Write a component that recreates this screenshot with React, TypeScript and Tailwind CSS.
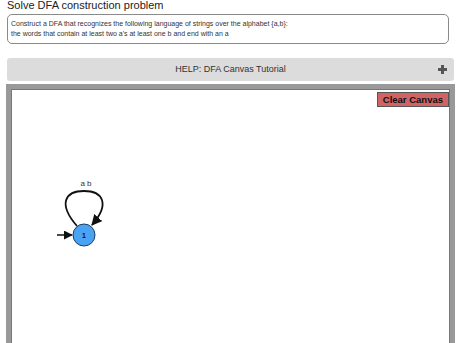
export default function App() {
  return (
    <div className="w-[474px] h-[343px] overflow-hidden bg-white font-['Liberation_Sans',Arial,sans-serif] text-[#222]">
      <div className="pl-[7px]">
        <h1 className="mt-[-1px] text-[11px] leading-[13px] font-normal text-[#222]">
          Solve DFA construction problem
        </h1>
        <div className="mt-[2px] w-[442px] h-[30px] rounded-[5px] border border-[#8a8a8a] px-[3px] pt-[4px] text-[7px] leading-[10px] text-[#333]">
          <p>Construct a DFA that recognizes the following language of strings over the alphabet {"{a,b}"}:</p>
          <p>the words that contain at least two a's at least one b and end with an a</p>
        </div>
        <div className="relative mt-[14px] w-[447px] h-[23px] rounded-[3px] bg-[#dcdcdc] flex items-center justify-center text-[9px] text-[#333]">
          HELP: DFA Canvas Tutorial
          <svg className="absolute right-[7px] top-[7px]" width="9" height="9" viewBox="0 0 9 9">
            <rect x="3" y="0" width="3" height="9" fill="#555" />
            <rect x="0" y="3" width="9" height="3" fill="#555" />
          </svg>
        </div>
        <div className="relative mt-[3px] ml-[-1px] w-[449px] h-[270px] border-[5px] border-[#999] bg-white">
          <div className="absolute inset-0 border border-[#777]" />
          <button className="absolute right-[1px] top-[3px] h-[15px] px-[5px] border border-[#555] bg-[#d06464] text-[9.5px] leading-[13px] font-bold text-[#111]">
            Clear Canvas
          </button>
          <svg className="absolute left-0 top-0" width="439" height="260" viewBox="0 0 439 260">
            <defs>
              <marker id="arr" viewBox="0 0 10 10" refX="9" refY="5" markerWidth="6" markerHeight="6" orient="auto">
                <path d="M0 0 L10 5 L0 10 Z" fill="#111" />
              </marker>
            </defs>
            <text x="75" y="97" textAnchor="middle" fontSize="8" fill="#333" fontFamily="Liberation Sans, Arial, sans-serif">
              a b
            </text>
            <path d="M66 137 C46 114, 55 102, 73 102 C91 102, 100 114, 81 136" fill="none" stroke="#111" strokeWidth="1.8" markerEnd="url(#arr)" />
            <line x1="46" y1="146" x2="61" y2="146" stroke="#111" strokeWidth="1.5" markerEnd="url(#arr)" />
            <circle cx="73" cy="146" r="11" fill="#4aa3f2" stroke="#1c3d66" strokeWidth="1" />
            <text x="73" y="149" textAnchor="middle" fontSize="7" fontWeight="bold" fill="#111" fontFamily="Liberation Sans, Arial, sans-serif">
              1
            </text>
          </svg>
        </div>
      </div>
    </div>
  );
}
